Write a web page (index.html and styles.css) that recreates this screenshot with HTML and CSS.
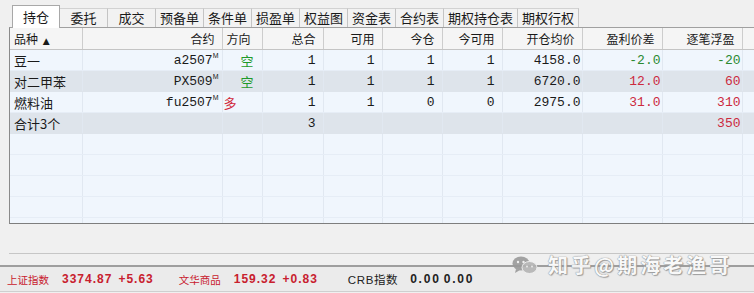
FILE: index.html
```html
<!DOCTYPE html>
<html lang="zh-CN">
<head>
  <meta charset="UTF-8" />
  <meta name="viewport" content="width=device-width, initial-scale=1" />
  <title>持仓</title>
  <link rel="stylesheet" href="styles.css">
</head>
<body>

  <div class="tabs">
    <div class="tab active">持仓</div>
    <div class="tab">委托</div>
    <div class="tab">成交</div>
    <div class="tab">预备单</div>
    <div class="tab">条件单</div>
    <div class="tab">损盈单</div>
    <div class="tab">权益图</div>
    <div class="tab">资金表</div>
    <div class="tab">合约表</div>
    <div class="tab">期权持仓表</div>
    <div class="tab">期权行权</div>
  </div>

  <div class="grid">
    <table>
      <colgroup>
        <col style="width:72px"><col style="width:140px"><col style="width:40px"><col style="width:61px">
        <col style="width:59px"><col style="width:60px"><col style="width:60px"><col style="width:80px">
        <col style="width:80px"><col style="width:80px"><col style="width:12px">
      </colgroup>
      <thead>
        <tr>
          <th class="left">品种 <span class="sort">▲</span></th>
          <th>合约</th>
          <th class="left">方向</th>
          <th>总合</th>
          <th>可用</th>
          <th>今仓</th>
          <th>今可用</th>
          <th>开仓均价</th>
          <th>盈利价差</th>
          <th>逐笔浮盈</th>
          <th></th>
        </tr>
      </thead>
      <tbody>
        <tr>
          <td class="name">豆一</td>
          <td class="code">a2507<sup>M</sup></td>
          <td class="dir short">空</td>
          <td class="num">1</td><td class="num">1</td><td class="num">1</td><td class="num">1</td>
          <td class="dec">4158.0</td>
          <td class="dec down">-2.0</td>
          <td class="dec down">-20</td>
          <td></td>
        </tr>
        <tr class="alt">
          <td class="name">对二甲苯</td>
          <td class="code">PX509<sup>M</sup></td>
          <td class="dir short">空</td>
          <td class="num">1</td><td class="num">1</td><td class="num">1</td><td class="num">1</td>
          <td class="dec">6720.0</td>
          <td class="dec up">12.0</td>
          <td class="dec up">60</td>
          <td></td>
        </tr>
        <tr>
          <td class="name">燃料油</td>
          <td class="code">fu2507<sup>M</sup></td>
          <td class="dir long">多</td>
          <td class="num">1</td><td class="num">1</td><td class="num">0</td><td class="num">0</td>
          <td class="dec">2975.0</td>
          <td class="dec up">31.0</td>
          <td class="dec up">310</td>
          <td></td>
        </tr>
        <tr class="alt">
          <td class="name">合计3个</td>
          <td></td><td></td>
          <td class="num">3</td>
          <td></td><td></td><td></td><td></td><td></td>
          <td class="dec up">350</td>
          <td></td>
        </tr>
        <tr class="empty"><td></td><td></td><td></td><td></td><td></td><td></td><td></td><td></td><td></td><td></td><td></td></tr>
        <tr class="empty"><td></td><td></td><td></td><td></td><td></td><td></td><td></td><td></td><td></td><td></td><td></td></tr>
        <tr class="empty"><td></td><td></td><td></td><td></td><td></td><td></td><td></td><td></td><td></td><td></td><td></td></tr>
        <tr class="empty"><td></td><td></td><td></td><td></td><td></td><td></td><td></td><td></td><td></td><td></td><td></td></tr>
        <tr class="empty"><td></td><td></td><td></td><td></td><td></td><td></td><td></td><td></td><td></td><td></td><td></td></tr>
      </tbody>
    </table>
  </div>

  <div class="divider"></div>

  <div class="status">
    <span class="idx red">上证指数</span>
    <span class="val red">3374.87</span>
    <span class="val red gap">+5.63</span>
    <span class="idx red">文华商品</span>
    <span class="val red">159.32</span>
    <span class="val red gap wide">+0.83</span>
    <span class="idx crb">CRB指数</span>
    <span class="val loose">0.00</span>
    <span class="val loose">0.00</span>
  </div>

  <div class="watermark">
    <svg width="26" height="18" viewBox="0 0 26 18">
      <ellipse cx="9" cy="7.5" rx="8.5" ry="7" fill="#9a9a9a"/>
      <path d="M4 13 L3 17 L8 14 Z" fill="#9a9a9a"/>
      <ellipse cx="17.5" cy="11.5" rx="7.5" ry="6" fill="#b4b4b4" stroke="#f0f0f0" stroke-width="1"/>
      <circle cx="6" cy="6" r="1.2" fill="#f0f0f0"/>
      <circle cx="11.5" cy="6" r="1.2" fill="#f0f0f0"/>
      <circle cx="15" cy="10.5" r="1" fill="#f0f0f0"/>
      <circle cx="20" cy="10.5" r="1" fill="#f0f0f0"/>
    </svg>
    <span>知乎@期海老渔哥</span>
  </div>

</body>
</html>
```

FILE: styles.css
```css
body {
  margin: 0;
  width: 754px;
  height: 293px;
  overflow: hidden;
  background: #f0f0f0;
  font-family: "Noto Sans CJK SC", "DejaVu Sans", sans-serif;
  color: #1a1a1a;
  position: relative;
}
.tabs {
  display: flex;
  align-items: flex-end;
  margin-left: 12px;
  height: 27px;
}
.tab {
  min-width: 48px;
  box-sizing: border-box;
  padding: 0 4px;
  height: 19px;
  line-height: 18px;
  font-size: 13px;
  text-align: center;
  border-top: 1px solid #d2d2d2;
  border-right: 1px solid #c4c4c4;
  background: #f2f2f2;
}
.tab.active {
  height: 23px;
  line-height: 22px;
  background: #fff;
  border: 1px solid #a8a8a8;
  border-bottom: none;
  margin-bottom: -1px;
  position: relative;
}
.grid {
  margin-left: 9px;
  height: 195px;
  overflow: hidden;
  border-top: 1px solid #a0a0a0;
  border-left: 1px solid #8a8a8a;
  border-bottom: 1px solid #7e7e7e;
  background: #eef5fd;
}
table {
  border-collapse: collapse;
  table-layout: fixed;
  width: 744px;
}
th {
  height: 21px;
  font-size: 12px;
  font-weight: normal;
  text-align: right;
  padding: 0 7px 0 4px;
  background: #f5f5f5;
  border-right: 1px solid #cdcdcd;
  border-bottom: 1px solid #c4c4c4;
  white-space: nowrap;
}
th.left {
  text-align: left;
}
.sort {
  font-family: "DejaVu Sans", sans-serif;
  font-size: 9px;
  margin-left: 2px;
}
td {
  height: 20px;
  padding: 0 4px;
  font-size: 13px;
  border-right: 1px solid #e1e8f1;
  border-bottom: 1px solid #e6edf6;
  background: #f0f6fd;
  white-space: nowrap;
}
tr.alt td {
  background: #dee4eb;
  border-bottom-color: #dee4eb;
}
.name {
  padding-left: 4px;
}
.code, .num, .dec {
  text-align: right;
  font-family: "Liberation Mono", "DejaVu Sans Mono", monospace;
}
.code {
  padding-right: 3px;
}
.code sup {
  font-size: 7px;
  vertical-align: 6px;
  line-height: 0;
  font-family: "Liberation Sans", sans-serif;
}
.num {
  padding-right: 7px;
}
.dec {
  padding-right: 1px;
}
.dir {
  padding-left: 1px;
}
.dir.short {
  padding-left: 18px;
  color: #1f9a2a;
}
.dir.long {
  color: #d0283a;
}
.down {
  color: #2a8a30;
}
.up {
  color: #cc2a3e;
}
.divider {
  margin: 29px 0 0 9px;
  height: 1px;
  background: #c6c6c6;
}
.status {
  margin-top: 11px;
  height: 24px;
  border-top: 2px solid #9e9e9e;
  border-bottom: 1px solid #cfcfcf;
  background: #ebebeb;
  display: flex;
  align-items: center;
  padding-left: 7px;
  font-size: 10.5px;
}
.idx {
  margin-right: 13px;
}
.idx.crb {
  font-family: "Liberation Sans", "Noto Sans CJK SC", sans-serif;
  font-size: 11.5px;
  letter-spacing: 0.6px;
  margin-right: 12px;
  color: #222;
}
.val {
  font-family: "Liberation Sans", Arial, sans-serif;
  font-size: 12px;
  font-weight: bold;
  letter-spacing: 1px;
  margin-right: 6px;
  color: #222;
}
.val.gap {
  margin-right: 25px;
}
.val.wide {
  margin-right: 30px;
}
.val.loose {
  letter-spacing: 1.8px;
  margin-right: 3px;
}
.red {
  color: #c8202e;
}
.watermark {
  position: absolute;
  left: 512px;
  top: 250px;
  display: flex;
  align-items: center;
  gap: 10px;
  font-size: 20px;
  letter-spacing: 3px;
  font-weight: bold;
  color: #fafafa;
  text-shadow: 0 0 1px #888, 0 0 1px #888, 1px 1px 1px #999;
  opacity: 0.9;
}
```
